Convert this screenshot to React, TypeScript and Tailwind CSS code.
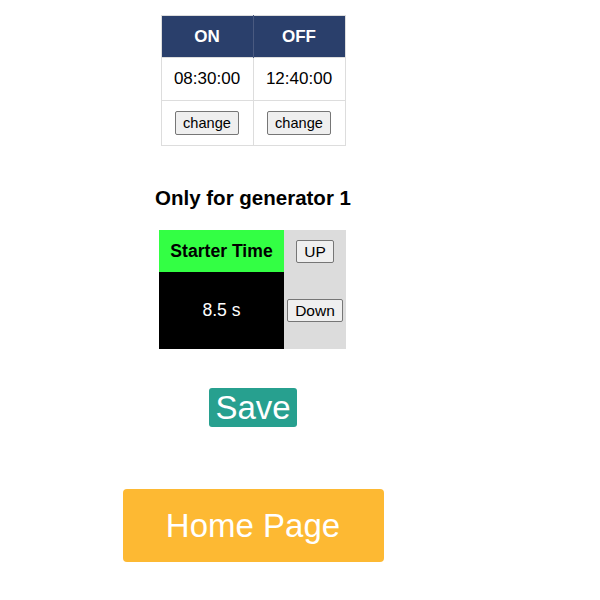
export default function App() {
  const btn =
    "bg-[#efefef] border border-[#767676] rounded-[2px] px-[7px] py-[1px] text-[14.6px] leading-[19px] text-black";
  return (
    <div className="w-[506px] flex flex-col items-center bg-white text-black" style={{ fontFamily: '"Liberation Sans", Arial, sans-serif' }}>
      <table className="mt-[15px] border-collapse border border-[#dddddd] text-center">
        <tbody>
          <tr className="h-[42px] bg-[#2a3f6b] text-white font-bold text-[17px]">
            <td className="w-[92px] border-r border-[#4a5a80]">ON</td>
            <td className="w-[92px]">OFF</td>
          </tr>
          <tr className="h-[43px] text-[17px]">
            <td className="border border-[#dddddd]">08:30:00</td>
            <td className="border border-[#dddddd]">12:40:00</td>
          </tr>
          <tr className="h-[45px]">
            <td className="border border-[#dddddd]"><button className={btn + " leading-[20px]"}>change</button></td>
            <td className="border border-[#dddddd]"><button className={btn + " leading-[20px]"}>change</button></td>
          </tr>
        </tbody>
      </table>
      <div className="mt-[40px] text-[20.5px] font-bold leading-[24px]">Only for generator 1</div>
      <div className="mt-[20px] mr-[1px] flex w-[187px] h-[119px] bg-[#dcdcdc]">
        <div className="w-[125px] flex flex-col">
          <div className="h-[42px] bg-[#33ff44] flex items-center justify-center font-bold text-[17.6px]">Starter Time</div>
          <div className="flex-1 bg-black text-white flex items-center justify-center text-[17.6px]">8.5 s</div>
        </div>
        <div className="flex-1 flex flex-col items-center">
          <div className="h-[42px] flex items-center justify-center"><button className={btn + " text-[15.5px]"}>UP</button></div>
          <div className="flex-1 flex items-center justify-center"><button className={btn + " text-[15.5px]"}>Down</button></div>
        </div>
      </div>
      <button className="mt-[39px] h-[39px] w-[88px] bg-[#27a08f] text-white text-[33px] leading-[38px] rounded-[3px]">Save</button>
      <button className="mt-[62px] h-[73px] w-[261px] bg-[#fdb933] text-white text-[33px] leading-[70px] rounded-[4px]">Home Page</button>
    </div>
  );
}
